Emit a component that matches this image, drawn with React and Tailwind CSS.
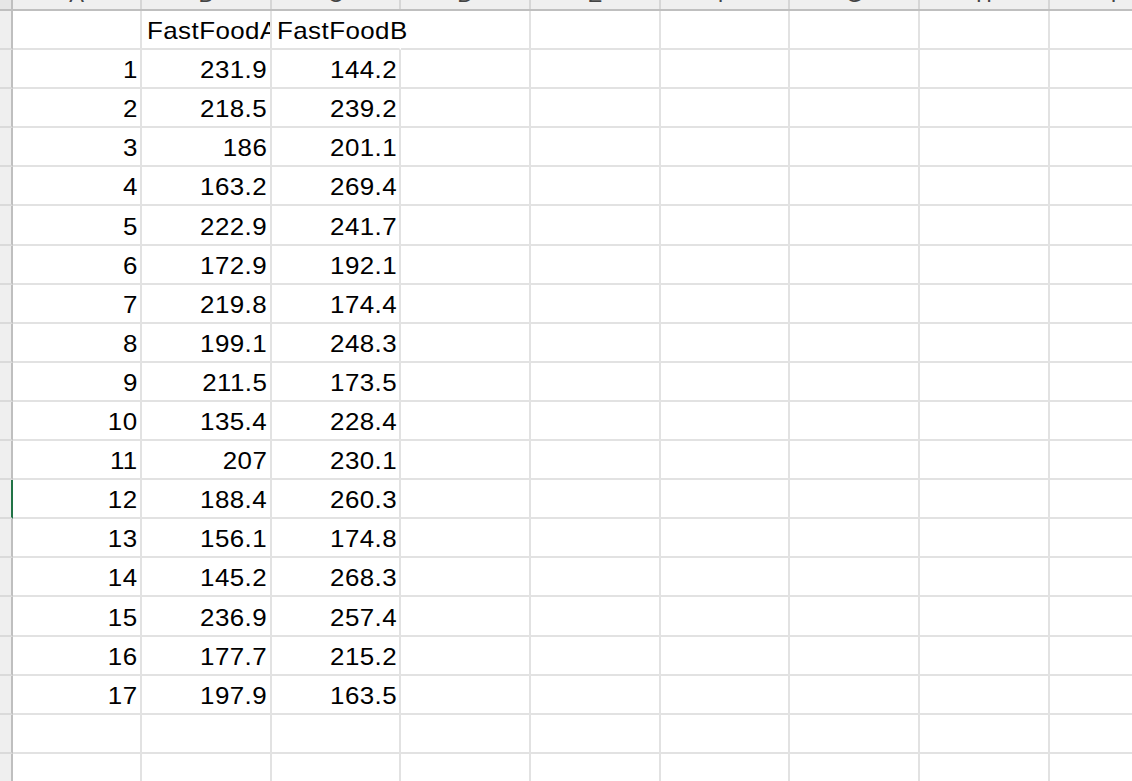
import React from 'react';

const colA = [1, 2, 3, 4, 5, 6, 7, 8, 9, 10, 11, 12, 13, 14, 15, 16, 17];
const colB = ['231.9', '218.5', '186', '163.2', '222.9', '172.9', '219.8', '199.1', '211.5', '135.4', '207', '188.4', '156.1', '145.2', '236.9', '177.7', '197.9'];
const colC = ['144.2', '239.2', '201.1', '269.4', '241.7', '192.1', '174.4', '248.3', '173.5', '228.4', '230.1', '260.3', '174.8', '268.3', '257.4', '215.2', '163.5'];

const letters = ['A', 'B', 'C', 'D', 'E', 'F', 'G', 'H', 'I'];

// sheet rows: header row, 17 data rows, then empties
const rows = [
  ['', 'FastFoodA', 'FastFoodB'],
  ...colA.map((n, i) => [String(n), colB[i], colC[i]]),
  ['', '', ''],
  ['', '', ''],
];

const Cell = ({ value, first, header, overflow }) => (
  <div
    className={`flex h-full shrink-0 items-end border-b-2 border-[#e2e2e2] pb-[5px] ${
      first ? 'w-[129px]' : 'w-[129.7px]'
    } ${header ? 'justify-start pl-[5px]' : 'justify-end pr-[2.5px]'} ${
      overflow ? 'border-r-2 border-r-white' : 'overflow-hidden border-r-2'
    }`}
  >
    <span
      className={`inline-block scale-x-[1.08] whitespace-nowrap text-[24px] leading-[24px] tracking-[0.4px] text-black ${
        header ? 'origin-left' : 'origin-right'
      }`}
    >
      {value}
    </span>
  </div>
);

export default function App() {
  return (
    <div className="h-[781px] w-[1132px] overflow-hidden bg-white font-['Liberation_Sans',Arial,sans-serif]">
      {/* column header strip */}
      <div className="flex h-[11px] border-b-2 border-[#bfbfbf] bg-[#efefef]">
        <div className="h-full w-[13px] shrink-0 border-r-2 border-[#bfbfbf] bg-[#e6e6e6]" />
        {letters.map((l, i) => (
          <div
            key={l}
            className={`flex h-full shrink-0 justify-center overflow-hidden border-r-2 border-[#d6d6d6] ${
              i === 0 ? 'w-[129px]' : 'w-[129.7px]'
            }`}
          >
            <span className="mt-[-15px] block text-[22px] leading-[20px] text-[#444]">{l}</span>
          </div>
        ))}
      </div>

      {rows.map((r, ri) => (
        <div key={ri} className="flex h-[39.1px]">
          <div
            className={`h-full w-[13px] shrink-0 border-r-2 border-b-2 border-b-[#dadada] bg-[#efefef] ${
              ri === 12 ? 'border-r-[#217346]' : 'border-r-[#bfbfbf]'
            }`}
          />
          <div className="flex">
            <Cell value={r[0]} first />
            <Cell value={r[1]} header={ri === 0} />
            <Cell value={r[2]} header={ri === 0} overflow={ri === 0} />
            {[0, 1, 2, 3, 4, 5].map((k) => (
              <div key={k} className="h-full w-[129.7px] shrink-0 border-b-2 border-r-2 border-[#e2e2e2]" />
            ))}
          </div>
        </div>
      ))}
    </div>
  );
}
